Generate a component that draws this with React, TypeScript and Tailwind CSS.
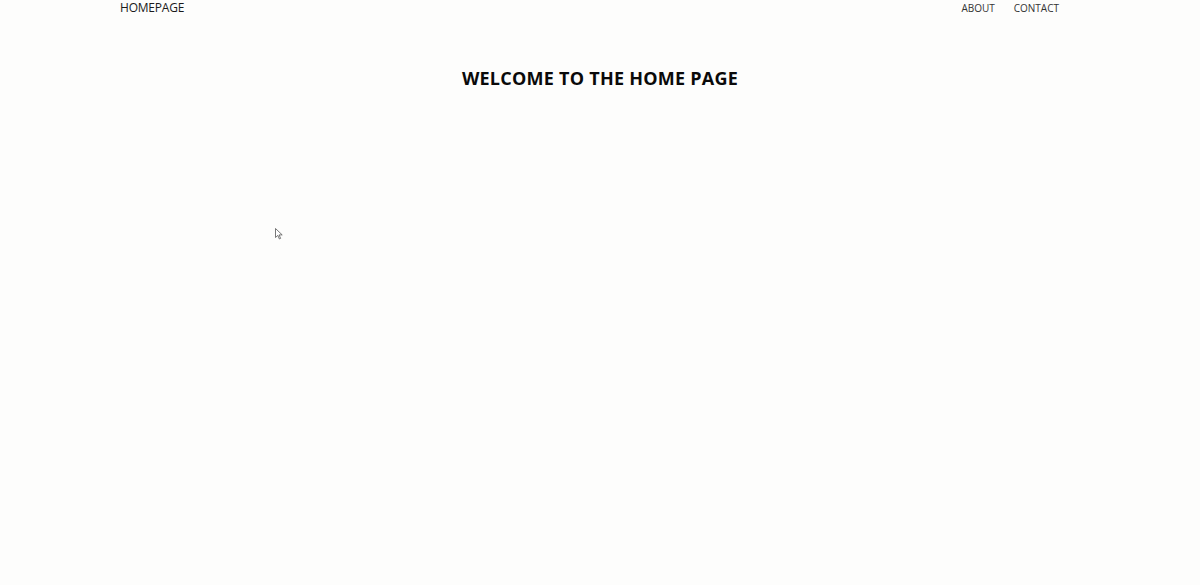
import React from "react";

export default function App() {
  return (
    <div className="relative min-h-[585px] w-full bg-[#fdfdfc] text-[#111]" style={{ fontFamily: "'Open Sans', 'Noto Sans', sans-serif" }}>
      <header className="mx-auto flex w-[960px] items-center justify-between">
        <div className="text-[12px] leading-[16px] tracking-[-0.2px] text-[#1a1a1a]">HOMEPAGE</div>
        <nav className="flex gap-[19px] pr-[21px] text-[10px] leading-[15px] text-[#333]">
          <span>ABOUT</span>
          <span>CONTACT</span>
        </nav>
      </header>
      <main className="mt-[50px] flex justify-center">
        <h1 className="text-[18px] font-bold leading-[24px] tracking-[0.25px] text-[#0a0a0a]">WELCOME TO THE HOME PAGE</h1>
      </main>
      <svg className="absolute left-[275px] top-[228px]" width="8" height="12" viewBox="0 0 8 12">
        <path d="M0.5 0.5 L0.5 9.5 L2.8 7.4 L4.4 11 L5.6 10.4 L4.1 6.9 L7.2 6.9 Z" fill="#fff" stroke="#555" strokeWidth="0.8" />
      </svg>
    </div>
  );
}
